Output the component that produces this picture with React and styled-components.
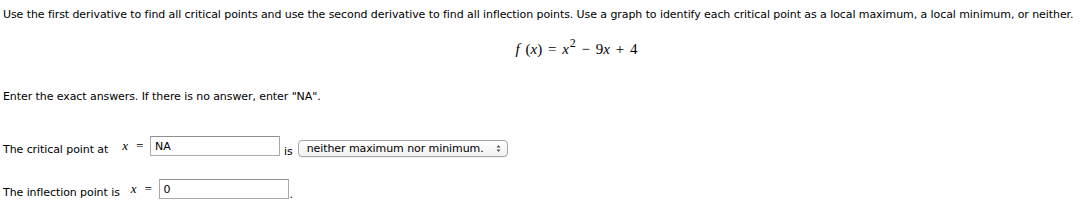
import React from 'react';
import styled, { createGlobalStyle } from 'styled-components';

const GlobalStyle = createGlobalStyle`
  body {
    margin: 0;
    background: #ffffff;
    color: #000000;
    font-family: "DejaVu Sans", Verdana, sans-serif;
    font-size: 11px;
    letter-spacing: -0.08px;
  }
`;

const Page = styled.div`
  padding: 8px 3px 0 3px;
`;

const Para = styled.div`
  line-height: 13px;
  white-space: nowrap;
`;

const Formula = styled.div`
  display: flex;
  justify-content: center;
  padding-left: 72px;
  font-family: "Liberation Serif", "Times New Roman", serif;
  font-size: 15px;
  height: 20px;
  line-height: 20px;
  margin: 18px 0 31px;
  word-spacing: 2px;
  letter-spacing: 0;

  i {
    font-style: italic;
  }

  sup {
    font-size: 12px;
    line-height: 0;
    position: relative;
    top: -1px;
    margin-left: 1px;
  }
`;

const Row = styled.div`
  display: flex;
  align-items: center;
  height: 22px;
  margin-top: ${(p) => p.top}px;
`;

const Label = styled.span`
  padding-top: 7px;
`;

const MathVar = styled.span`
  font-family: "Liberation Serif", "Times New Roman", serif;
  font-style: italic;
  font-size: 13px;
  margin: 0 6px 0 ${(p) => p.left}px;
  word-spacing: 4px;
  letter-spacing: 0;
`;

const TextInput = styled.input`
  box-sizing: border-box;
  width: 130px;
  height: 20px;
  border: 1px solid #a9a9a9;
  border-top-color: #8e8e8e;
  padding: 0 4px;
  font-family: "DejaVu Sans", Verdana, sans-serif;
  font-size: 11px;
  color: #000;
  outline: none;
  background: #fff;
`;

const Suffix = styled.span`
  margin-left: ${(p) => p.left || 4}px;
  padding-top: 10px;
`;

const Select = styled.div`
  box-sizing: border-box;
  display: flex;
  align-items: center;
  justify-content: space-between;
  width: 210px;
  height: 17px;
  margin-left: 5px;
  padding: 0 6px 0 8px;
  border: 1px solid #a6a6a6;
  border-radius: 4px;
  background: linear-gradient(#ffffff, #f1f1f1);
  box-shadow: 0 1px 0 rgba(0, 0, 0, 0.05);
  font-size: 11px;
  margin-top: 4px;
`;

const Arrows = styled.svg`
  width: 5px;
  height: 9px;
`;

export default function App() {
  return (
    <>
      <GlobalStyle />
      <Page>
        <Para>
          Use the first derivative to find all critical points and use the second derivative to find all inflection points. Use a graph to identify each critical point as a local maximum, a local minimum, or neither.
        </Para>
        <Formula>
          <span>
            <i>f</i> (<i>x</i>) = <i>x</i><sup>2</sup> − 9<i>x</i> + 4
          </span>
        </Formula>
        <Para>Enter the exact answers. If there is no answer, enter "NA".</Para>
        <Row top={32}>
          <Label>The critical point at</Label>
          <MathVar left={14}>x =</MathVar>
          <TextInput defaultValue="NA" />
          <Suffix>is</Suffix>
          <Select>
            <span>neither maximum nor minimum.</span>
            <Arrows viewBox="0 0 5 9">
              <path d="M0.5 3.5 L2.5 1 L4.5 3.5 Z M0.5 5.5 L2.5 8 L4.5 5.5 Z" fill="#555" />
            </Arrows>
          </Select>
        </Row>
        <Row top={21}>
          <Label>The inflection point is</Label>
          <MathVar left={11}>x =</MathVar>
          <TextInput defaultValue="0" />
          <Suffix left={1}>.</Suffix>
        </Row>
      </Page>
    </>
  );
}
